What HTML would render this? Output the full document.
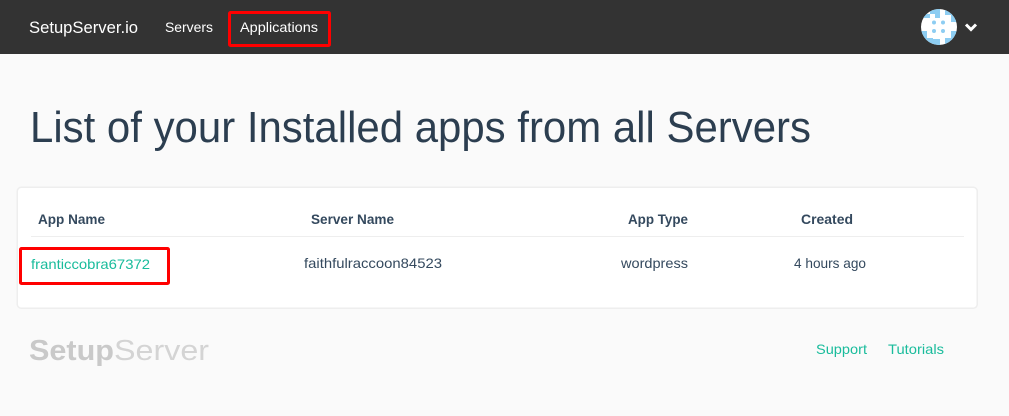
<!DOCTYPE html>
<html><head><meta charset="utf-8"><style>
html,body{margin:0;padding:0;width:1009px;height:416px;overflow:hidden;background:#fafafa}
svg{display:block}
text{font-family:"Liberation Sans",sans-serif}
</style></head><body>
<svg width="1009" height="416" viewBox="0 0 1009 416" xmlns="http://www.w3.org/2000/svg">
<rect width="1009" height="416" fill="#fafafa"/>
<rect width="1009" height="54" fill="#333333"/>
<text x="29" y="33" font-size="17" fill="#fff" textLength="109" lengthAdjust="spacingAndGlyphs">SetupServer.io</text>
<text x="165" y="32" font-size="14" fill="#fff" textLength="48" lengthAdjust="spacingAndGlyphs">Servers</text>
<text x="240" y="32" font-size="14" fill="#fff" textLength="78" lengthAdjust="spacingAndGlyphs">Applications</text>
<rect x="229.5" y="12.5" width="100" height="33" fill="none" stroke="#f00" stroke-width="3" rx="1"/>
<clipPath id="c"><circle cx="939" cy="27" r="18"/></clipPath>
<g clip-path="url(#c)">
<rect x="921" y="9" width="36" height="36" fill="#fff"/>
<path d="M930 9h10v9h-5v-4h-5zM921 14h9v4h-9zM945 9h12v13h-6v-7h-6zM921 31h6v7h6v7h-12zM933 39h7v6h-7zM951 31h6v14h-12v-7h6z" fill="#8dcdf2"/>
</g>
<circle cx="934" cy="22.500" r="2" fill="#8dcdf2"/><circle cx="943" cy="22.500" r="2" fill="#8dcdf2"/>
<circle cx="934" cy="31" r="2" fill="#8dcdf2"/><circle cx="943" cy="31" r="2" fill="#8dcdf2"/>
<path d="M966 24.500l5 5 5-5" fill="none" stroke="#fff" stroke-width="3"/>
<text x="30" y="142" font-size="44" fill="#2c3e50" textLength="781" lengthAdjust="spacingAndGlyphs">List of your Installed apps from all Servers</text>
<rect x="17.250" y="187.250" width="960" height="121" rx="4" fill="#fff" stroke="#eeeeee" stroke-width="1.500"/>
<text x="38" y="224" font-size="13.500" font-weight="700" fill="#34495e" textLength="67" lengthAdjust="spacingAndGlyphs">App Name</text>
<text x="311" y="224" font-size="13.500" font-weight="700" fill="#34495e" textLength="83" lengthAdjust="spacingAndGlyphs">Server Name</text>
<text x="628" y="224" font-size="13.500" font-weight="700" fill="#34495e" textLength="60" lengthAdjust="spacingAndGlyphs">App Type</text>
<text x="801" y="224" font-size="13.500" font-weight="700" fill="#34495e" textLength="52" lengthAdjust="spacingAndGlyphs">Created</text>
<rect x="31" y="236" width="933" height="1" fill="#eeeeee"/>
<text x="31" y="269" font-size="14" fill="#1abc9c" textLength="119" lengthAdjust="spacingAndGlyphs">franticcobra67372</text>
<text x="304" y="268" font-size="14" fill="#34495e" textLength="138" lengthAdjust="spacingAndGlyphs">faithfulraccoon84523</text>
<text x="621" y="268" font-size="14" fill="#34495e" textLength="67" lengthAdjust="spacingAndGlyphs">wordpress</text>
<text x="794" y="268" font-size="14" fill="#34495e" textLength="72" lengthAdjust="spacingAndGlyphs">4 hours ago</text>
<rect x="20.500" y="248.500" width="148" height="35" fill="none" stroke="#f00" stroke-width="3" rx="1"/>
<text x="29" y="360" font-size="29" font-weight="700" fill="#c9c9c9" textLength="85" lengthAdjust="spacingAndGlyphs">Setup</text>
<text x="114" y="360" font-size="29" fill="#d4d4d4" textLength="95" lengthAdjust="spacingAndGlyphs">Server</text>
<text x="816" y="354" font-size="14" fill="#1abc9c" textLength="51" lengthAdjust="spacingAndGlyphs">Support</text>
<text x="888" y="354" font-size="14" fill="#1abc9c" textLength="56" lengthAdjust="spacingAndGlyphs">Tutorials</text>
</svg>
</body></html>
